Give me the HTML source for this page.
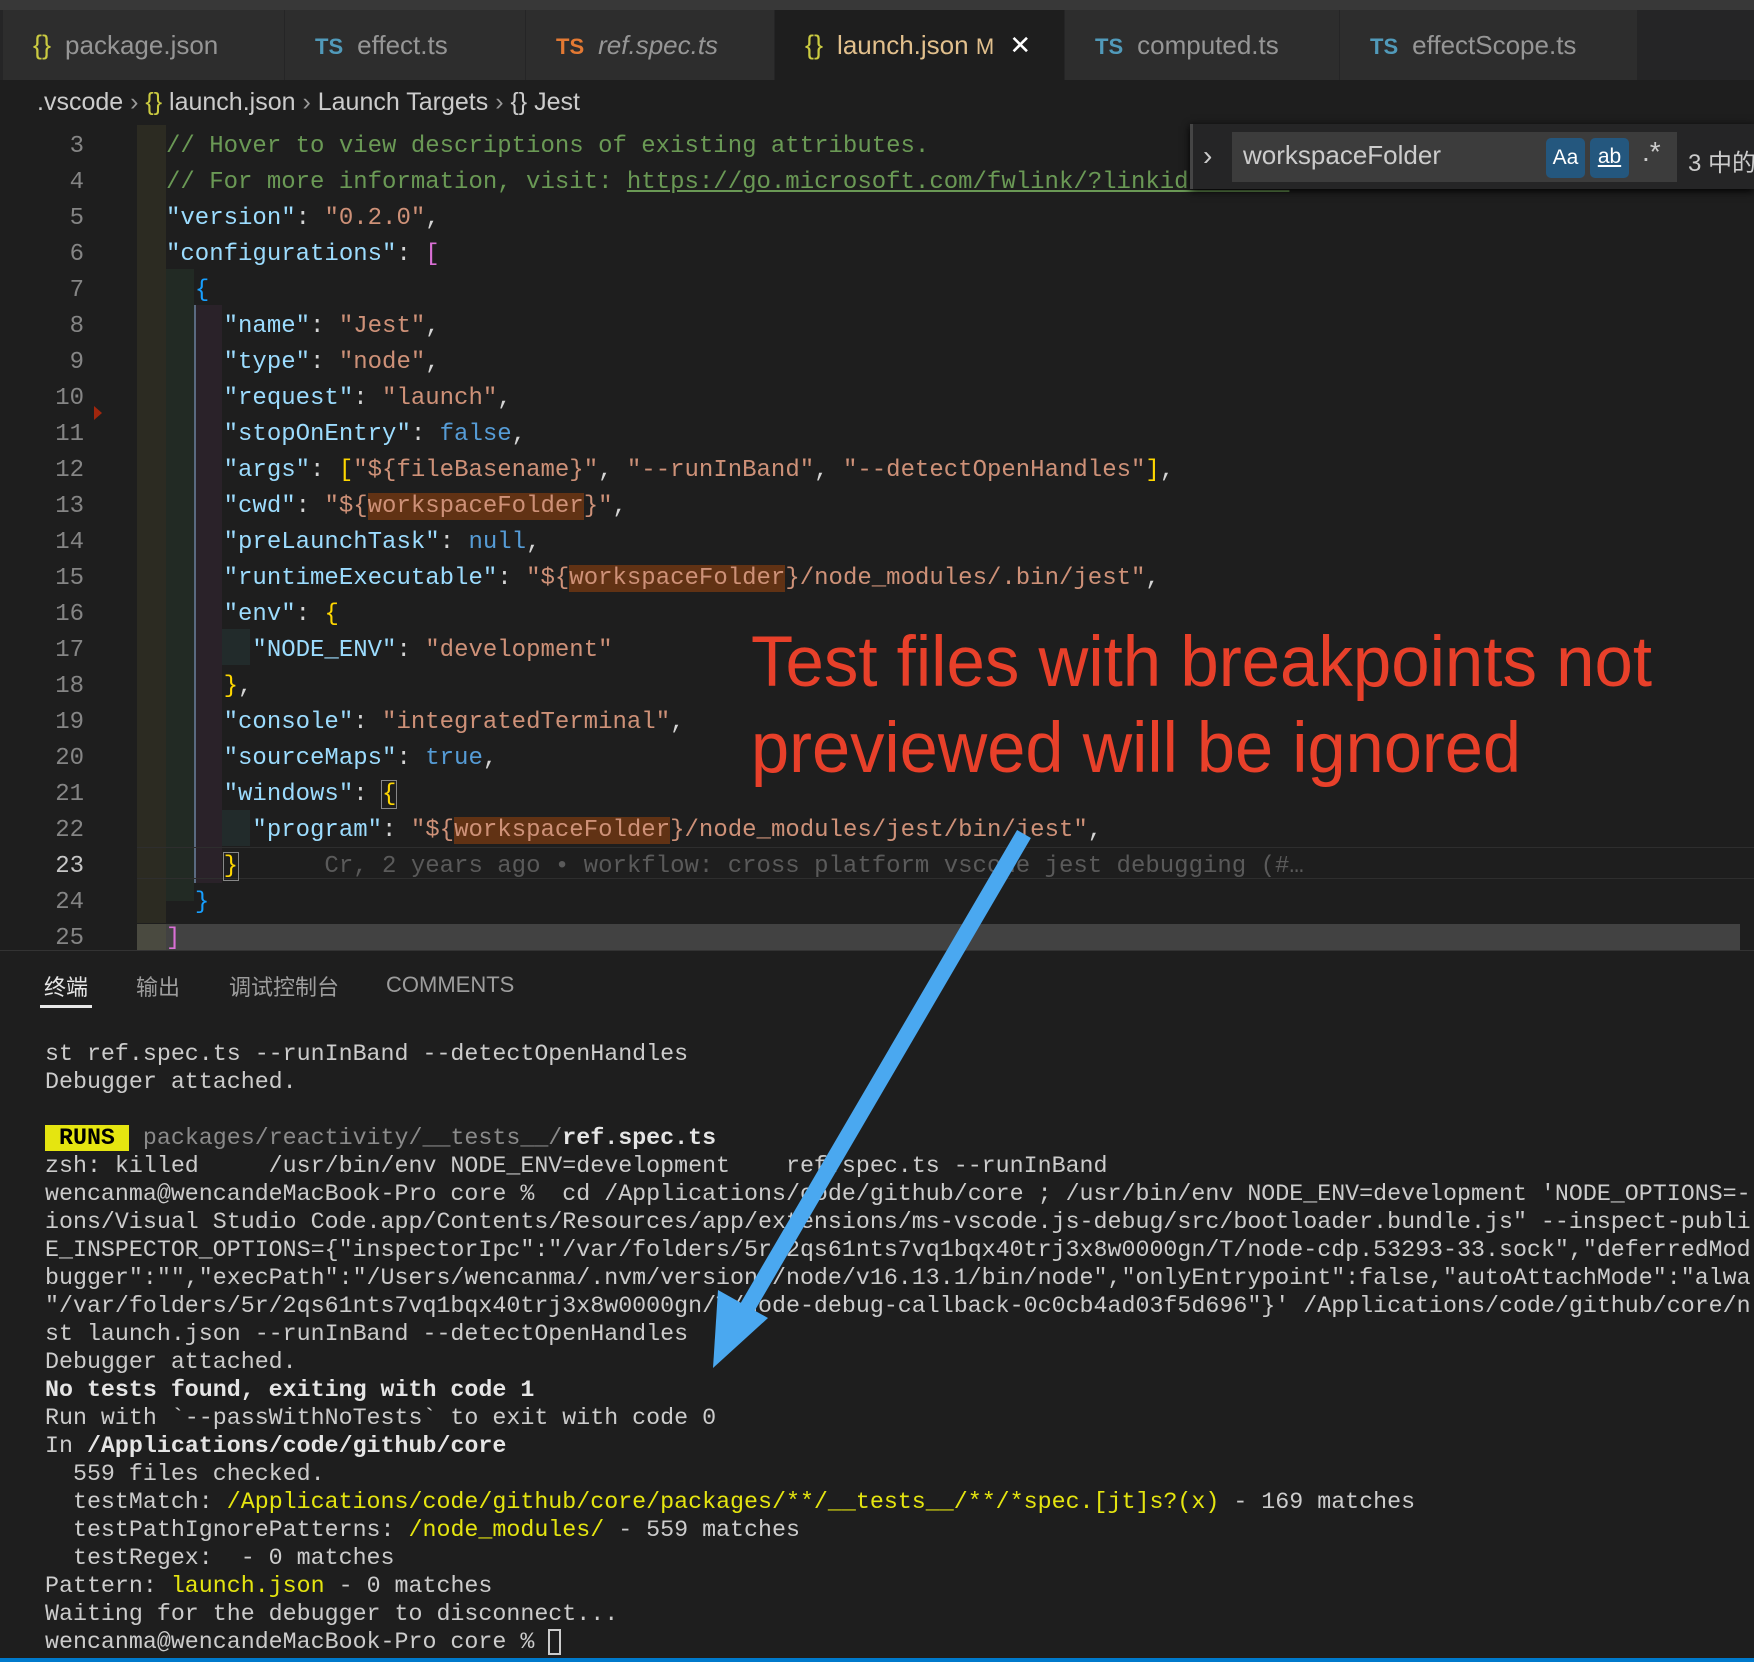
<!DOCTYPE html>
<html><head><meta charset="utf-8"><style>
*{margin:0;padding:0;box-sizing:border-box}
body{width:1754px;height:1662px;background:#1e1e1e;position:relative;overflow:hidden;font-family:"Liberation Sans","Noto Sans CJK SC",sans-serif}
.abs{position:absolute}
.tab{position:absolute;top:10px;height:70px;background:#2d2d2d;border-right:1px solid #252526;color:#969696;font-size:26px;line-height:70px;white-space:nowrap}
.tab .ic{display:inline-block;margin-left:30px;margin-right:14px;font-weight:bold;font-size:22px}
.tab .br{font-size:27px;font-weight:normal}
.code{position:absolute;left:166px;font-family:"Liberation Mono",monospace;font-size:24px;white-space:pre;color:#d4d4d4;height:36px;line-height:36px}
.ln{position:absolute;left:0;width:84px;text-align:right;font-family:"Liberation Mono",monospace;font-size:24px;color:#858585;height:36px;line-height:36px}
.k{color:#9cdcfe}.s{color:#ce9178}.c{color:#6a9955}.b{color:#569cd6}.y{color:#ffd700}.p{color:#da70d6}.bl{color:#179fff}
.hl{background:#613214}
.t{position:absolute;left:45px;font-family:"Liberation Mono",monospace;font-size:23.3px;white-space:pre;color:#cccccc;height:28px;line-height:28px}
.ty{color:#e5e510}
.bo{font-weight:bold;color:#e5e5e5}
#ed{position:absolute;left:0;top:4px;width:1754px;height:946px}
</style></head><body>
<div class="abs" style="left:0;top:0;width:1754px;height:10px;background:#383838"></div>
<div class="abs" style="left:0;top:10px;width:1754px;height:70px;background:#252526"></div>
<div class="tab" style="left:3px;width:282px"><span class="ic br" style="color:#cbcb41">{}</span>package.json</div>
<div class="tab" style="left:285px;width:241px"><span class="ic" style="color:#519aba">TS</span>effect.ts</div>
<div class="tab" style="left:526px;width:249px"><span class="ic" style="color:#e37933">TS</span><i>ref.spec.ts</i></div>
<div class="tab" style="left:775px;width:290px;background:#1e1e1e;color:#e2c08d"><span class="ic br" style="color:#cbcb41">{}</span>launch.json <span style="font-size:22px">M</span> <span style="color:#fff;margin-left:8px">✕</span></div>
<div class="tab" style="left:1065px;width:275px"><span class="ic" style="color:#519aba">TS</span>computed.ts</div>
<div class="tab" style="left:1340px;width:298px"><span class="ic" style="color:#519aba">TS</span>effectScope.ts</div>
<div class="abs" style="left:37px;top:80px;height:44px;line-height:44px;font-size:25px;color:#cccccc;white-space:pre">.vscode <span style="color:#999">›</span> <span style="color:#cbcb41">{}</span> launch.json <span style="color:#999">›</span> Launch Targets <span style="color:#999">›</span> {} Jest</div>
<div id="ed">
<div class="abs" style="left:137px;top:121px;width:29px;height:798px;background:#2c2b22"></div>
<div class="abs" style="left:166px;top:265px;width:28px;height:632px;background:#222a24"></div>
<div class="abs" style="left:194px;top:301px;width:28px;height:578px;background:#2a2229;border-left:2px solid #5a6a80"></div>
<div class="abs" style="left:222px;top:625px;width:28px;height:36px;background:#222b2b"></div>
<div class="abs" style="left:222px;top:806px;width:28px;height:36px;background:#222b2b"></div>
<div class="abs" style="left:137px;top:843px;width:1617px;height:32px;border-top:1px solid #2e2e2e;border-bottom:1px solid #2e2e2e"></div>
<div class="abs" style="left:166px;top:920px;width:1574px;height:26px;background:#424242"></div>
<div class="abs" style="left:137px;top:920px;width:29px;height:26px;background:#4a4a40"></div>
<div class="abs" style="left:94px;top:402px;width:0;height:0;border-top:7px solid transparent;border-bottom:7px solid transparent;border-left:8px solid #a1260d"></div>

<div class="ln" style="top:125px">3</div><div class="code c" style="top:125px">// Hover to view descriptions of existing attributes.</div>
<div class="ln" style="top:161px">4</div><div class="code c" style="top:161px">// For more information, visit: <span style="text-decoration:underline">https://go.microsoft.com/fwlink/?linkid=830387</span></div>
<div class="ln" style="top:197px">5</div><div class="code" style="top:197px"><span class="k">"version"</span>: <span class="s">"0.2.0"</span>,</div>
<div class="ln" style="top:233px">6</div><div class="code" style="top:233px"><span class="k">"configurations"</span>: <span class="p">[</span></div>
<div class="ln" style="top:269px">7</div><div class="code" style="top:269px">  <span class="bl">{</span></div>
<div class="ln" style="top:305px">8</div><div class="code" style="top:305px">    <span class="k">"name"</span>: <span class="s">"Jest"</span>,</div>
<div class="ln" style="top:341px">9</div><div class="code" style="top:341px">    <span class="k">"type"</span>: <span class="s">"node"</span>,</div>
<div class="ln" style="top:377px">10</div><div class="code" style="top:377px">    <span class="k">"request"</span>: <span class="s">"launch"</span>,</div>
<div class="ln" style="top:413px">11</div><div class="code" style="top:413px">    <span class="k">"stopOnEntry"</span>: <span class="b">false</span>,</div>
<div class="ln" style="top:449px">12</div><div class="code" style="top:449px">    <span class="k">"args"</span>: <span class="y">[</span><span class="s">"${fileBasename}"</span>, <span class="s">"--runInBand"</span>, <span class="s">"--detectOpenHandles"</span><span class="y">]</span>,</div>
<div class="ln" style="top:485px">13</div><div class="code" style="top:485px">    <span class="k">"cwd"</span>: <span class="s">"${<span class="hl">workspaceFolder</span>}"</span>,</div>
<div class="ln" style="top:521px">14</div><div class="code" style="top:521px">    <span class="k">"preLaunchTask"</span>: <span class="b">null</span>,</div>
<div class="ln" style="top:557px">15</div><div class="code" style="top:557px">    <span class="k">"runtimeExecutable"</span>: <span class="s">"${<span class="hl">workspaceFolder</span>}/node_modules/.bin/jest"</span>,</div>
<div class="ln" style="top:593px">16</div><div class="code" style="top:593px">    <span class="k">"env"</span>: <span class="y">{</span></div>
<div class="ln" style="top:629px">17</div><div class="code" style="top:629px">      <span class="k">"NODE_ENV"</span>: <span class="s">"development"</span></div>
<div class="ln" style="top:665px">18</div><div class="code" style="top:665px">    <span class="y">}</span>,</div>
<div class="ln" style="top:701px">19</div><div class="code" style="top:701px">    <span class="k">"console"</span>: <span class="s">"integratedTerminal"</span>,</div>
<div class="ln" style="top:737px">20</div><div class="code" style="top:737px">    <span class="k">"sourceMaps"</span>: <span class="b">true</span>,</div>
<div class="ln" style="top:773px">21</div><div class="code" style="top:773px">    <span class="k">"windows"</span>: <span class="y" style="outline:1px solid #888">{</span></div>
<div class="ln" style="top:809px">22</div><div class="code" style="top:809px">      <span class="k">"program"</span>: <span class="s">"${<span class="hl">workspaceFolder</span>}/node_modules/jest/bin/jest"</span>,</div>
<div class="ln" style="top:845px;color:#c6c6c6">23</div><div class="code" style="top:845px">    <span class="y" style="outline:1px solid #888">}</span><span style="color:#5a5a5a">      Cr, 2 years ago • workflow: cross platform vscode jest debugging (#…</span></div>
<div class="ln" style="top:881px">24</div><div class="code" style="top:881px">  <span class="bl">}</span></div>
<div class="ln" style="top:917px">25</div><div class="code" style="top:917px"><span class="p">]</span></div>
</div>

<div class="abs" style="left:1190px;top:124px;width:564px;height:65px;background:#252526;border-left:3px solid #454545;box-shadow:0 2px 8px #000"></div>
<div class="abs" style="left:1203px;top:140px;color:#ccc;font-size:28px">›</div>
<div class="abs" style="left:1232px;top:132px;width:445px;height:50px;background:#3c3c3c"></div>
<div class="abs" style="left:1243px;top:140px;color:#ccc;font-size:26px">workspaceFolder</div>
<div class="abs" style="left:1546px;top:138px;width:39px;height:40px;background:#24577e;border-radius:5px;color:#fff;font-size:21px;text-align:center;line-height:40px">Aa</div>
<div class="abs" style="left:1590px;top:138px;width:39px;height:40px;background:#24577e;border-radius:5px;color:#fff;font-size:21px;text-align:center;line-height:38px;text-decoration:underline">ab</div>
<div class="abs" style="left:1642px;top:136px;color:#ccc;font-size:28px">.*</div>
<div class="abs" style="left:1688px;top:143px;color:#ccc;font-size:24px;white-space:nowrap">3 中的</div>

<div class="abs" style="left:0;top:950px;width:1754px;height:1px;background:#333"></div>
<div class="abs" style="left:44px;top:970px;color:#e7e7e7;font-size:22px">终端</div>
<div class="abs" style="left:40px;top:1005px;width:52px;height:3px;background:#e7e7e7"></div>
<div class="abs" style="left:136px;top:970px;color:#9d9d9d;font-size:22px">输出</div>
<div class="abs" style="left:229px;top:970px;color:#9d9d9d;font-size:22px">调试控制台</div>
<div class="abs" style="left:386px;top:972px;color:#9d9d9d;font-size:22px">COMMENTS</div>

<div class="t" style="top:1040px">st ref.spec.ts --runInBand --detectOpenHandles</div>
<div class="t" style="top:1068px">Debugger attached.</div>
<div class="t" style="top:1124px"><span style="background:#e5e510;color:#000;font-weight:bold"> RUNS </span> <span style="color:#8a8a8a">packages/reactivity/__tests__/</span><span class="bo">ref.spec.ts</span></div>
<div class="t" style="top:1152px">zsh: killed     /usr/bin/env NODE_ENV=development    ref.spec.ts --runInBand</div>
<div class="t" style="top:1180px">wencanma@wencandeMacBook-Pro core %  cd /Applications/code/github/core ; /usr/bin/env NODE_ENV=development 'NODE_OPTIONS=--</div>
<div class="t" style="top:1208px">ions/Visual Studio Code.app/Contents/Resources/app/extensions/ms-vscode.js-debug/src/bootloader.bundle.js" --inspect-publi</div>
<div class="t" style="top:1236px">E_INSPECTOR_OPTIONS={"inspectorIpc":"/var/folders/5r/2qs61nts7vq1bqx40trj3x8w0000gn/T/node-cdp.53293-33.sock","deferredMod</div>
<div class="t" style="top:1264px">bugger":"","execPath":"/Users/wencanma/.nvm/versions/node/v16.13.1/bin/node","onlyEntrypoint":false,"autoAttachMode":"alwa</div>
<div class="t" style="top:1292px">"/var/folders/5r/2qs61nts7vq1bqx40trj3x8w0000gn/T/node-debug-callback-0c0cb4ad03f5d696"}' /Applications/code/github/core/n</div>
<div class="t" style="top:1320px">st launch.json --runInBand --detectOpenHandles</div>
<div class="t" style="top:1348px">Debugger attached.</div>
<div class="t bo" style="top:1376px">No tests found, exiting with code 1</div>
<div class="t" style="top:1404px">Run with `--passWithNoTests` to exit with code 0</div>
<div class="t" style="top:1432px">In <span class="bo">/Applications/code/github/core</span></div>
<div class="t" style="top:1460px">  559 files checked.</div>
<div class="t" style="top:1488px">  testMatch: <span class="ty">/Applications/code/github/core/packages/**/__tests__/**/*spec.[jt]s?(x)</span> - 169 matches</div>
<div class="t" style="top:1516px">  testPathIgnorePatterns: <span class="ty">/node_modules/</span> - 559 matches</div>
<div class="t" style="top:1544px">  testRegex:  - 0 matches</div>
<div class="t" style="top:1572px">Pattern: <span class="ty">launch.json</span> - 0 matches</div>
<div class="t" style="top:1600px">Waiting for the debugger to disconnect...</div>
<div class="t" style="top:1628px">wencanma@wencandeMacBook-Pro core % <span style="display:inline-block;width:13px;height:26px;border:2px solid #ccc;vertical-align:middle"></span></div>
<div class="abs" style="left:0;top:1658px;width:1754px;height:4px;background:#007acc"></div>

<svg class="abs" style="left:0;top:0" width="1754" height="1662">
<text x="751" y="686" fill="#e8402a" font-family="Liberation Sans, sans-serif" font-size="71" textLength="901" lengthAdjust="spacingAndGlyphs">Test files with breakpoints not</text>
<text x="751" y="772" fill="#e8402a" font-family="Liberation Sans, sans-serif" font-size="71" textLength="770" lengthAdjust="spacingAndGlyphs">previewed will be ignored</text>
<line x1="1024" y1="834" x2="740" y2="1320" stroke="#4aa8f0" stroke-width="16"/>
<polygon points="713,1368 718,1290 768,1318" fill="#4aa8f0"/>
</svg>
</body></html>
